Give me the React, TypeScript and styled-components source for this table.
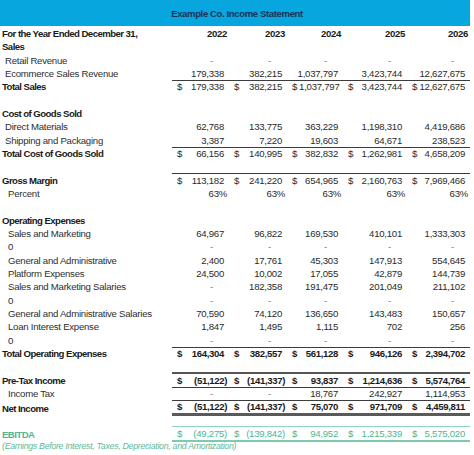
import React from 'react'
import styled, { createGlobalStyle, css } from 'styled-components'

const GlobalStyle = createGlobalStyle`
  html, body {
    margin: 0;
    padding: 0;
    background: #ffffff;
  }
  body {
    font-family: 'Liberation Sans', Arial, sans-serif;
    color: #262626;
  }
`

type Line = 'none' | 'thin' | 'medium' | 'double' | 'green' | 'greenThick'
type Tone = 'normal' | 'green'

type RowData = {
  label?: string
  indent?: number
  bold?: boolean
  boldValues?: boolean
  values?: (number | null)[]
  dollar?: boolean
  percent?: boolean
  line?: Line
  tone?: Tone
}

const COLUMNS = '172px 57px 58px 56px 64px 63px'
const YEARS = ['2022', '2023', '2024', '2025', '2026']

const dashes = [null, null, null, null, null]

const rows: RowData[] = [
  { label: 'Sales', bold: true },
  { label: 'Retail Revenue', indent: 1, values: dashes },
  { label: 'Ecommerce Sales Revenue', indent: 1, values: [179338, 382215, 1037797, 3423744, 12627675], line: 'thin' },
  { label: 'Total Sales', bold: true, dollar: true, values: [179338, 382215, 1037797, 3423744, 12627675] },
  {},
  { label: 'Cost of Goods Sold', bold: true },
  { label: 'Direct Materials', indent: 1, values: [62768, 133775, 363229, 1198310, 4419686] },
  { label: 'Shipping and Packaging', indent: 1, values: [3387, 7220, 19603, 64671, 238523], line: 'thin' },
  { label: 'Total Cost of Goods Sold', bold: true, dollar: true, values: [66156, 140995, 382832, 1262981, 4658209] },
  { line: 'thin', values: [] },
  { label: 'Gross Margin', bold: true, dollar: true, values: [113182, 241220, 654965, 2160763, 7969466] },
  { label: 'Percent', indent: 2, percent: true, values: [63, 63, 63, 63, 63] },
  {},
  { label: 'Operating Expenses', bold: true },
  { label: 'Sales and Marketing', indent: 2, values: [64967, 96822, 169530, 410101, 1333303] },
  { label: '0', indent: 2, values: dashes },
  { label: 'General and Administrative', indent: 2, values: [2400, 17761, 45303, 147913, 554645] },
  { label: 'Platform Expenses', indent: 2, values: [24500, 10002, 17055, 42879, 144739] },
  { label: 'Sales and Marketing Salaries', indent: 2, values: [null, 182358, 191475, 201049, 211102] },
  { label: '0', indent: 2, values: dashes },
  { label: 'General and Administrative Salaries', indent: 2, values: [70590, 74120, 136650, 143483, 150657] },
  { label: 'Loan Interest Expense', indent: 2, values: [1847, 1495, 1115, 702, 256] },
  { label: '0', indent: 2, values: dashes, line: 'thin' },
  { label: 'Total Operating Expenses', bold: true, boldValues: true, dollar: true, values: [164304, 382557, 561128, 946126, 2394702] },
  { line: 'medium', values: [] },
  { label: 'Pre-Tax Income', bold: true, boldValues: true, dollar: true, values: [-51122, -141337, 93837, 1214636, 5574764], line: 'thin' },
  { label: 'Income Tax', indent: 2, values: [null, null, 18767, 242927, 1114953], line: 'thin' },
  { label: 'Net Income', bold: true, boldValues: true, dollar: true, values: [-51122, -141337, 75070, 971709, 4459811], line: 'double' },
  { line: 'green', values: [] },
  { label: 'EBITDA', bold: true, dollar: true, tone: 'green', values: [-49275, -139842, 94952, 1215339, 5575020], line: 'greenThick' },
]

const Sheet = styled.div`
  width: 470px;
  font-size: 9.6px;
  line-height: 13px;
`

const TitleBar = styled.div`
  height: 26px;
  margin-bottom: 1px;
  background: #07a6de;
  color: #1c3458;
  font-weight: bold;
  letter-spacing: -0.4px;
  display: flex;
  align-items: center;
  justify-content: center;
  padding-left: 4px;
`

const Row = styled.div`
  display: grid;
  grid-template-columns: ${COLUMNS};
  height: 13.33px;
`

const Label = styled.div<{ $indent: number; $bold: boolean; $tone: Tone }>`
  padding-left: ${(p) => 2 + p.$indent * 3}px;
  display: flex;
  align-items: center;
  white-space: nowrap;
  font-weight: ${(p) => (p.$bold ? 'bold' : 'normal')};
  letter-spacing: ${(p) => (p.$bold ? '-0.55px' : '-0.25px')};
  color: ${(p) => (p.$tone === 'green' ? '#4fb592' : p.$bold ? '#1a1a1a' : '#2e2e2e')};
`

const lineStyles: Record<Line, ReturnType<typeof css>> = {
  none: css``,
  thin: css`border-bottom: 1px solid #3c3c3c;`,
  medium: css`border-bottom: 2px solid #555555;`,
  double: css`border-bottom: 3px solid #5a5a5a;`,
  green: css`border-bottom: 1px solid #8fd3ba;`,
  greenThick: css`border-bottom: 2px solid #7dcbad;`,
}

const Cell = styled.div<{ $line: Line; $bold: boolean; $tone: Tone }>`
  box-sizing: border-box;
  display: flex;
  align-items: center;
  justify-content: space-between;
  padding: 0 2px 0 5px;
  white-space: nowrap;
  font-weight: ${(p) => (p.$bold ? 'bold' : 'normal')};
  letter-spacing: ${(p) => (p.$bold ? '-0.35px' : '-0.25px')};
  color: ${(p) => (p.$tone === 'green' ? '#4fb592' : p.$bold ? '#1a1a1a' : '#2a2a2a')};
  ${(p) => lineStyles[p.$line]}
`

const Dollar = styled.span`
  margin-right: 2px;
`

const Amount = styled.span<{ $negative: boolean }>`
  margin-left: auto;
  margin-right: ${(p) => (p.$negative ? '0' : '3px')};
`

const Dash = styled.span`
  margin-left: auto;
  margin-right: 14px;
  color: #777777;
`

const YearCell = styled.div`
  display: flex;
  align-items: center;
  justify-content: flex-end;
  padding-right: 2px;
  font-weight: bold;
  letter-spacing: -0.35px;
  color: #1a1a1a;
`

const Note = styled.div`
  height: 13.33px;
  display: flex;
  align-items: center;
  padding-left: 2px;
  font-style: italic;
  font-size: 8.8px;
  letter-spacing: -0.3px;
  color: #5cb99a;
  white-space: nowrap;
`

const fmt = (n: number) => Math.abs(n).toLocaleString('en-US')

function ValueCell({ row, value }: { row: RowData; value: number | null | undefined }) {
  const line = row.line ?? 'none'
  const tone = row.tone ?? 'normal'
  const bold = !!row.boldValues

  if (value === undefined) {
    return <Cell $line={line} $bold={bold} $tone={tone} />
  }

  if (value === null) {
    return (
      <Cell $line={line} $bold={bold} $tone={tone}>
        <Dash>-</Dash>
      </Cell>
    )
  }

  if (row.percent) {
    return (
      <Cell $line={line} $bold={bold} $tone={tone}>
        <Amount $negative>{value}%</Amount>
      </Cell>
    )
  }

  const negative = value < 0
  return (
    <Cell $line={line} $bold={bold} $tone={tone}>
      {row.dollar && <Dollar>$</Dollar>}
      <Amount $negative={negative}>{negative ? `(${fmt(value)})` : fmt(value)}</Amount>
    </Cell>
  )
}

export default function App() {
  return (
    <>
      <GlobalStyle />
      <Sheet>
        <TitleBar>Example Co. Income Statement</TitleBar>
        <Row>
          <Label $indent={0} $bold $tone="normal">For the Year Ended December 31,</Label>
          {YEARS.map((y) => (
            <YearCell key={y}>{y}</YearCell>
          ))}
        </Row>
        {rows.map((row, i) => (
          <Row key={i}>
            <Label $indent={row.indent ?? 0} $bold={!!row.bold} $tone={row.tone ?? 'normal'}>
              {row.label}
            </Label>
            {YEARS.map((y, c) => (
              <ValueCell key={y} row={row} value={row.values ? row.values[c] : undefined} />
            ))}
          </Row>
        ))}
        <Note>(Earnings Before Interest, Taxes, Depreciation, and Amortization)</Note>
      </Sheet>
    </>
  )
}
